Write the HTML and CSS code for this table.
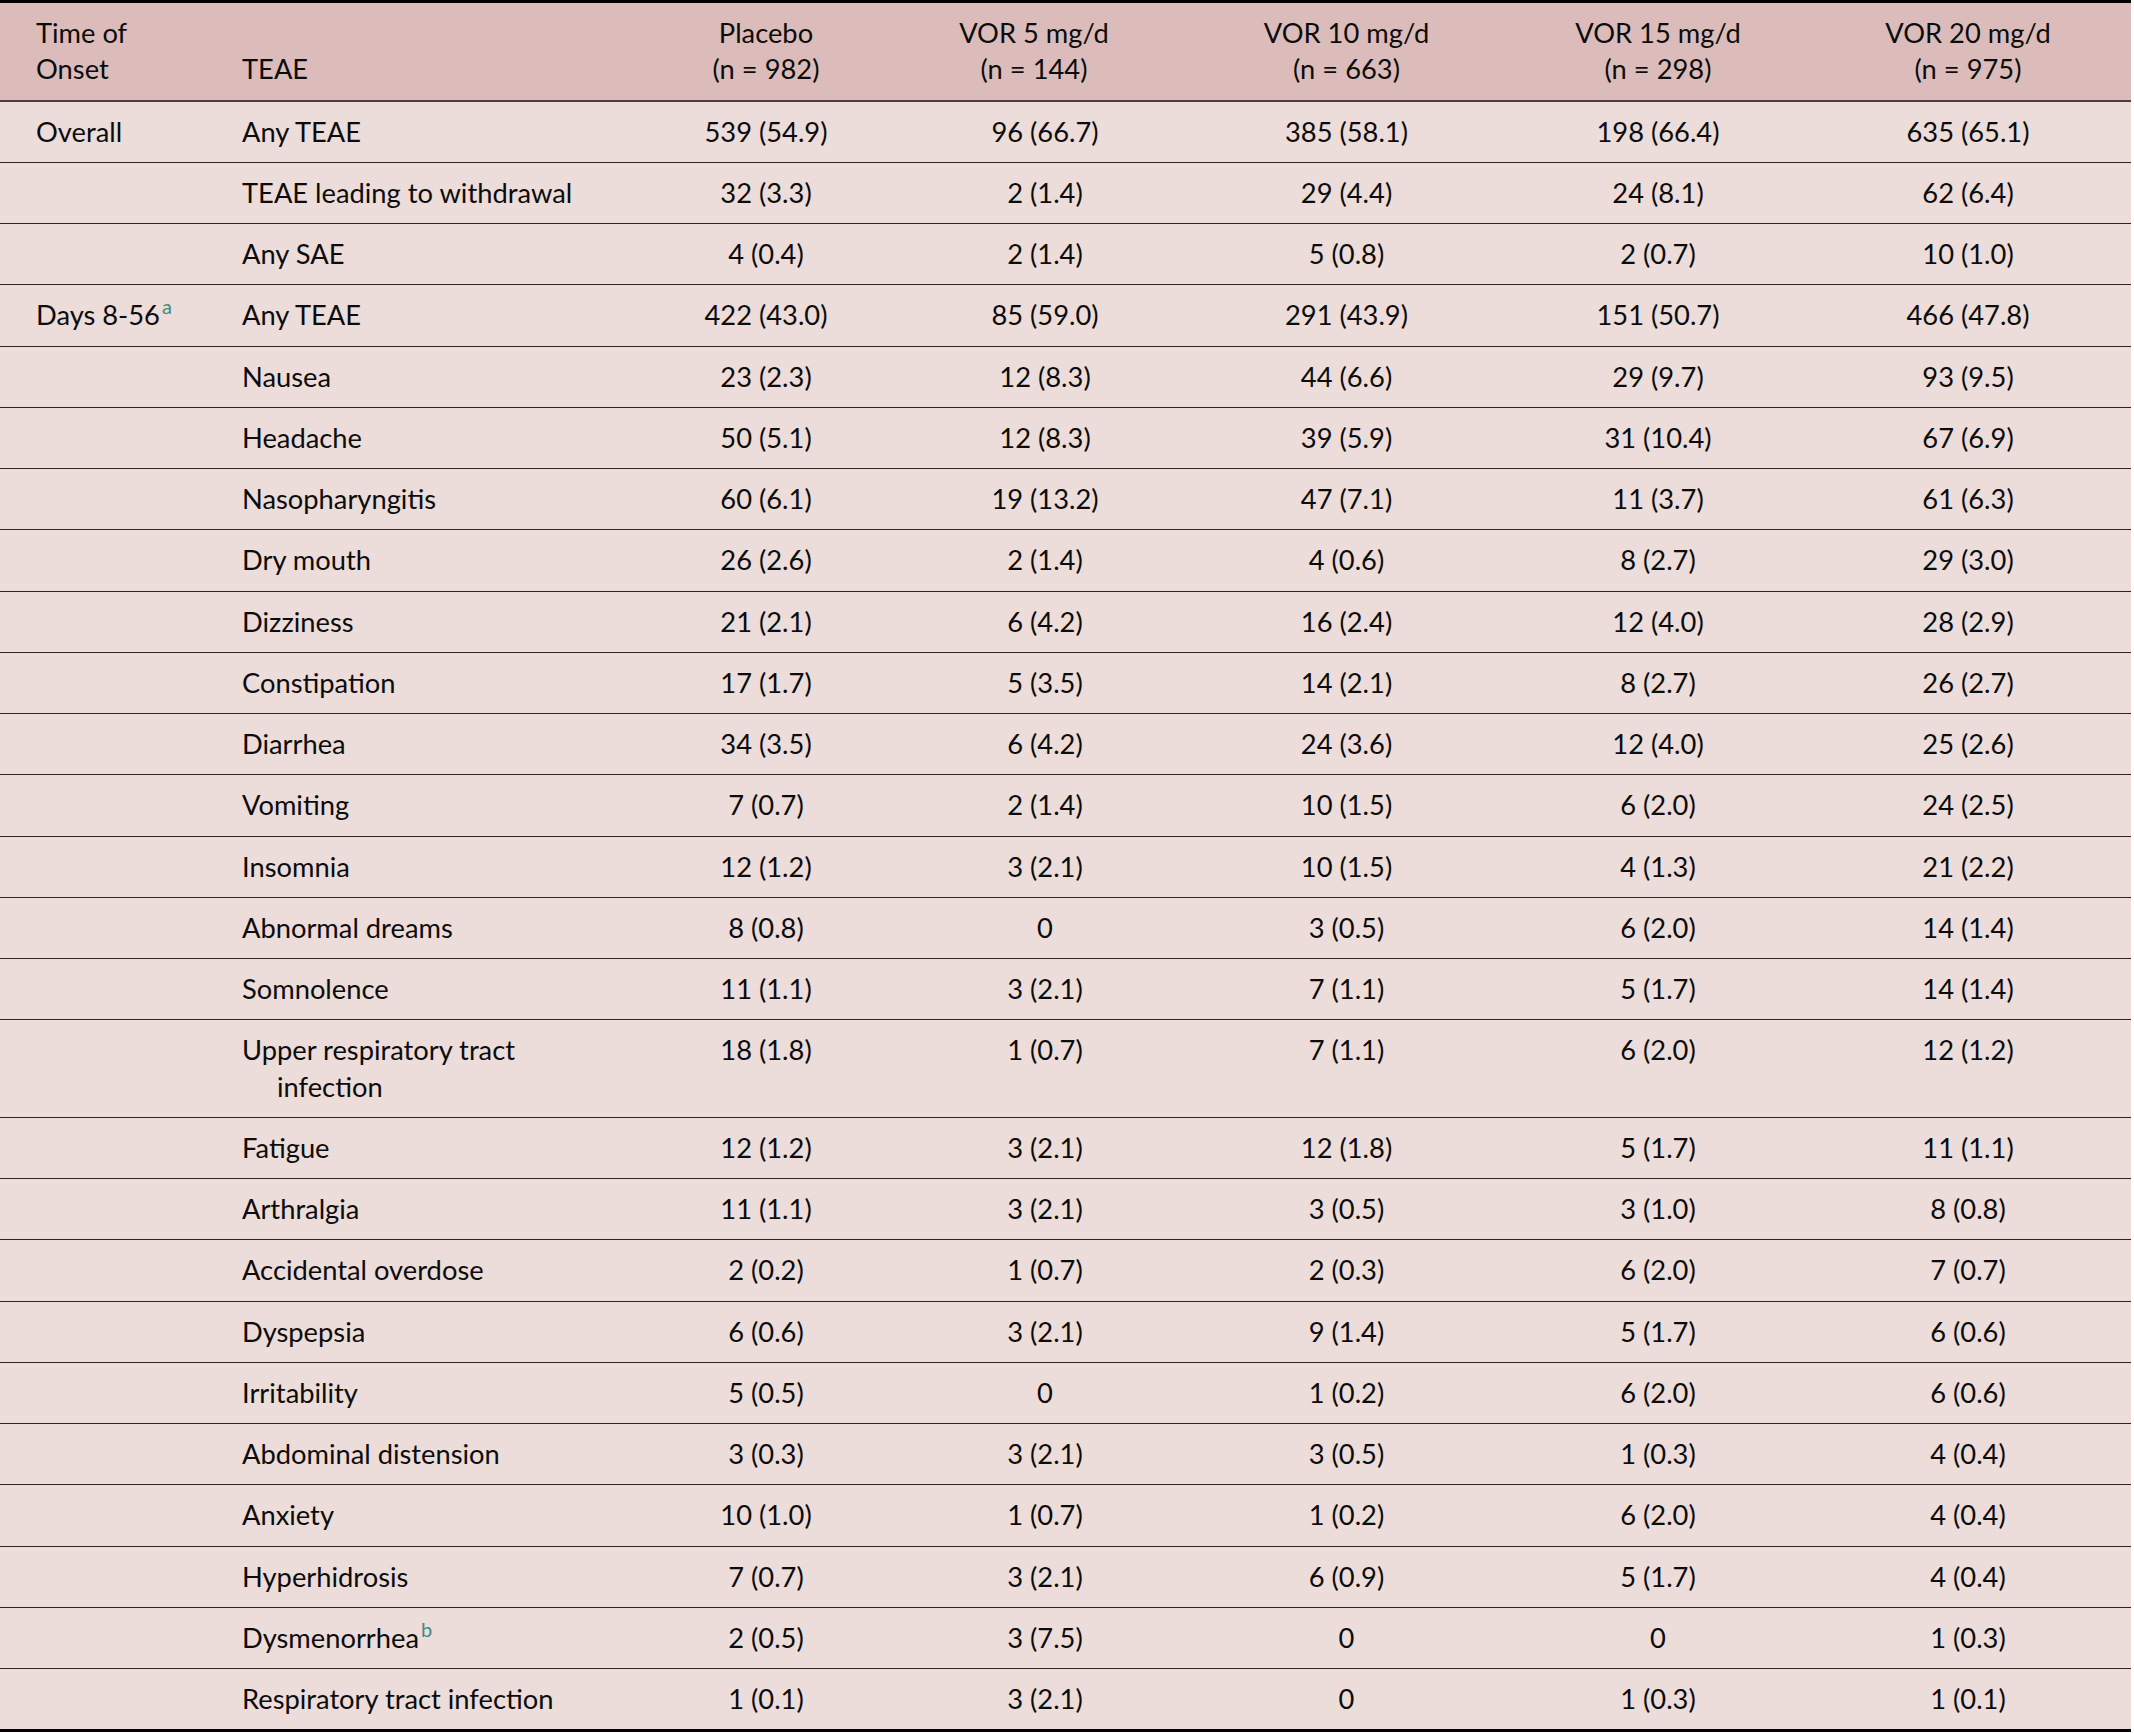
FILE: index.html
```html
<!DOCTYPE html>
<html>
<head>
<meta charset="utf-8">
<link rel="stylesheet" href="styles.css">
</head>
<body>
<table class="ae">
<colgroup>
<col class="c-onset"><col class="c-teae"><col class="c-pbo"><col class="c-v5"><col class="c-v10"><col class="c-v15"><col class="c-v20">
</colgroup>
<thead>
<tr>
<th class="lft">Time of<br>Onset</th>
<th class="lft2">TEAE</th>
<th>Placebo<br>(n = 982)</th>
<th class="h-v5">VOR 5 mg/d<br>(n = 144)</th>
<th>VOR 10 mg/d<br>(n = 663)</th>
<th>VOR 15 mg/d<br>(n = 298)</th>
<th class="last">VOR 20 mg/d<br>(n = 975)</th>
</tr>
</thead>
<tbody>
<tr><td class="lft">Overall</td><td class="lft2">Any TEAE</td><td>539 (54.9)</td><td>96 (66.7)</td><td>385 (58.1)</td><td>198 (66.4)</td><td class="last">635 (65.1)</td></tr>
<tr><td class="lft"></td><td class="lft2">TEAE leading to withdrawal</td><td>32 (3.3)</td><td>2 (1.4)</td><td>29 (4.4)</td><td>24 (8.1)</td><td class="last">62 (6.4)</td></tr>
<tr><td class="lft"></td><td class="lft2">Any SAE</td><td>4 (0.4)</td><td>2 (1.4)</td><td>5 (0.8)</td><td>2 (0.7)</td><td class="last">10 (1.0)</td></tr>
<tr><td class="lft">Days 8-56<sup class="fn">a</sup></td><td class="lft2">Any TEAE</td><td>422 (43.0)</td><td>85 (59.0)</td><td>291 (43.9)</td><td>151 (50.7)</td><td class="last">466 (47.8)</td></tr>
<tr><td class="lft"></td><td class="lft2">Nausea</td><td>23 (2.3)</td><td>12 (8.3)</td><td>44 (6.6)</td><td>29 (9.7)</td><td class="last">93 (9.5)</td></tr>
<tr><td class="lft"></td><td class="lft2">Headache</td><td>50 (5.1)</td><td>12 (8.3)</td><td>39 (5.9)</td><td>31 (10.4)</td><td class="last">67 (6.9)</td></tr>
<tr><td class="lft"></td><td class="lft2">Nasopharyngitis</td><td>60 (6.1)</td><td>19 (13.2)</td><td>47 (7.1)</td><td>11 (3.7)</td><td class="last">61 (6.3)</td></tr>
<tr><td class="lft"></td><td class="lft2">Dry mouth</td><td>26 (2.6)</td><td>2 (1.4)</td><td>4 (0.6)</td><td>8 (2.7)</td><td class="last">29 (3.0)</td></tr>
<tr><td class="lft"></td><td class="lft2">Dizziness</td><td>21 (2.1)</td><td>6 (4.2)</td><td>16 (2.4)</td><td>12 (4.0)</td><td class="last">28 (2.9)</td></tr>
<tr><td class="lft"></td><td class="lft2">Constipation</td><td>17 (1.7)</td><td>5 (3.5)</td><td>14 (2.1)</td><td>8 (2.7)</td><td class="last">26 (2.7)</td></tr>
<tr><td class="lft"></td><td class="lft2">Diarrhea</td><td>34 (3.5)</td><td>6 (4.2)</td><td>24 (3.6)</td><td>12 (4.0)</td><td class="last">25 (2.6)</td></tr>
<tr><td class="lft"></td><td class="lft2">Vomiting</td><td>7 (0.7)</td><td>2 (1.4)</td><td>10 (1.5)</td><td>6 (2.0)</td><td class="last">24 (2.5)</td></tr>
<tr><td class="lft"></td><td class="lft2">Insomnia</td><td>12 (1.2)</td><td>3 (2.1)</td><td>10 (1.5)</td><td>4 (1.3)</td><td class="last">21 (2.2)</td></tr>
<tr><td class="lft"></td><td class="lft2">Abnormal dreams</td><td>8 (0.8)</td><td>0</td><td>3 (0.5)</td><td>6 (2.0)</td><td class="last">14 (1.4)</td></tr>
<tr><td class="lft"></td><td class="lft2">Somnolence</td><td>11 (1.1)</td><td>3 (2.1)</td><td>7 (1.1)</td><td>5 (1.7)</td><td class="last">14 (1.4)</td></tr>
<tr><td class="lft"></td><td class="lft2 hang">Upper respiratory tract infection</td><td>18 (1.8)</td><td>1 (0.7)</td><td>7 (1.1)</td><td>6 (2.0)</td><td class="last">12 (1.2)</td></tr>
<tr><td class="lft"></td><td class="lft2">Fatigue</td><td>12 (1.2)</td><td>3 (2.1)</td><td>12 (1.8)</td><td>5 (1.7)</td><td class="last">11 (1.1)</td></tr>
<tr><td class="lft"></td><td class="lft2">Arthralgia</td><td>11 (1.1)</td><td>3 (2.1)</td><td>3 (0.5)</td><td>3 (1.0)</td><td class="last">8 (0.8)</td></tr>
<tr><td class="lft"></td><td class="lft2">Accidental overdose</td><td>2 (0.2)</td><td>1 (0.7)</td><td>2 (0.3)</td><td>6 (2.0)</td><td class="last">7 (0.7)</td></tr>
<tr><td class="lft"></td><td class="lft2">Dyspepsia</td><td>6 (0.6)</td><td>3 (2.1)</td><td>9 (1.4)</td><td>5 (1.7)</td><td class="last">6 (0.6)</td></tr>
<tr><td class="lft"></td><td class="lft2">Irritability</td><td>5 (0.5)</td><td>0</td><td>1 (0.2)</td><td>6 (2.0)</td><td class="last">6 (0.6)</td></tr>
<tr><td class="lft"></td><td class="lft2">Abdominal distension</td><td>3 (0.3)</td><td>3 (2.1)</td><td>3 (0.5)</td><td>1 (0.3)</td><td class="last">4 (0.4)</td></tr>
<tr><td class="lft"></td><td class="lft2">Anxiety</td><td>10 (1.0)</td><td>1 (0.7)</td><td>1 (0.2)</td><td>6 (2.0)</td><td class="last">4 (0.4)</td></tr>
<tr><td class="lft"></td><td class="lft2">Hyperhidrosis</td><td>7 (0.7)</td><td>3 (2.1)</td><td>6 (0.9)</td><td>5 (1.7)</td><td class="last">4 (0.4)</td></tr>
<tr><td class="lft"></td><td class="lft2">Dysmenorrhea<sup class="fn">b</sup></td><td>2 (0.5)</td><td>3 (7.5)</td><td>0</td><td>0</td><td class="last">1 (0.3)</td></tr>
<tr><td class="lft"></td><td class="lft2">Respiratory tract infection</td><td>1 (0.1)</td><td>3 (2.1)</td><td>0</td><td>1 (0.3)</td><td class="last">1 (0.1)</td></tr>
</tbody>
</table>
</body>
</html>
```
FILE: styles.css
```css
html, body {
  margin: 0;
  padding: 0;
  background: #ffffff;
}
.ae {
  width: 2131px;
  border-collapse: collapse;
  table-layout: fixed;
  font-family: Lato, "Open Sans", sans-serif;
  font-size: 27.3px;
  line-height: 36.25px;
  color: #0c0c0c;
  background: #ecdcda;
  border-top: 3px solid #000;
  border-bottom: 3px solid #000;
}
.c-onset { width: 242px; }
.c-teae { width: 390px; }
.c-pbo { width: 268px; }
.c-v5 { width: 290px; }
.c-v10 { width: 313px; }
.c-v15 { width: 310px; }
.c-v20 { width: 318px; }
.ae th {
  background: #dbbcbb;
  font-weight: normal;
  text-align: center;
  vertical-align: bottom;
  padding: 12px 0;
  border-bottom: 2px solid #4a3e3e;
}
.ae td {
  text-align: center;
  vertical-align: top;
  padding: 12px 0;
  border-bottom: 1px solid #2a2424;
}
.ae tbody tr:last-child td {
  border-bottom: none;
}
.ae .lft {
  text-align: left;
  padding-left: 36px;
}
.ae .lft2 {
  text-align: left;
  padding-left: 0;
}
.ae .h-v5 {
  padding-right: 22px;
}
.ae .last {
  padding-right: 8px;
}
.ae .hang {
  padding-left: 35px;
  text-indent: -35px;
  padding-right: 60px;
}
.fn {
  color: #3d8d80;
  font-size: 20px;
  line-height: 0;
  vertical-align: 11px;
  margin-left: 2px;
}
```
